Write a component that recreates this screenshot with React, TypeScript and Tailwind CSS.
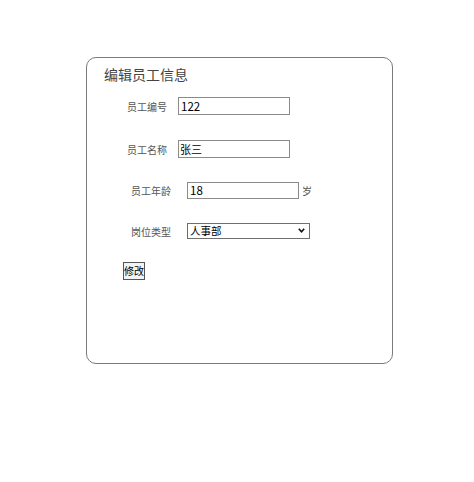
import { useState } from 'react';

const font = "font-['Noto_Sans_CJK_SC','Noto_Sans',sans-serif]";

export default function App() {
  const [code, setCode] = useState('122');
  const [name, setName] = useState('张三');
  const [age, setAge] = useState('18');
  const [dept, setDept] = useState('人事部');

  return (
    <div className={`min-h-[482px] w-[474px] bg-white pt-[57px] ${font}`}>
      <div className="ml-[86px] h-[307px] w-[307px] rounded-[10px] border border-[#7a7a7a] pt-[6px]">
        {/* 标题 */}
        <h2 className="ml-[17px] h-[20px] text-[14px] leading-[20px] text-[#444]">编辑员工信息</h2>

        {/* 员工编号 */}
        <div className="mt-[13px] flex h-[18px] items-center pl-[40px]">
          <span className="w-[40px] text-[10px] text-[#555]">员工编号</span>
          <input
            value={code}
            onChange={(e) => setCode(e.target.value)}
            className="ml-[11px] h-[18px] w-[112px] border border-[#8a8a8a] px-[2px] text-[11.5px] text-black outline-none"
          />
        </div>

        {/* 员工名称 */}
        <div className="mt-[25px] flex h-[18px] items-center pl-[40px]">
          <span className="w-[40px] text-[10px] text-[#555]">员工名称</span>
          <input
            value={name}
            onChange={(e) => setName(e.target.value)}
            className="ml-[11px] h-[18px] w-[112px] border border-[#8a8a8a] px-[1px] text-[11px] text-black outline-none"
          />
        </div>

        {/* 员工年龄 */}
        <div className="mt-[24px] flex h-[17px] items-center pl-[44px]">
          <span className="w-[40px] text-[10px] text-[#555]">员工年龄</span>
          <input
            value={age}
            onChange={(e) => setAge(e.target.value)}
            className="ml-[16px] h-[17px] w-[112px] border border-[#8a8a8a] px-[2px] text-[11.5px] text-black outline-none"
          />
          <span className="ml-[3px] text-[10px] text-[#555]">岁</span>
        </div>

        {/* 岗位类型 */}
        <div className="mt-[24px] flex h-[16px] items-center pl-[44px]">
          <span className="w-[40px] text-[10px] text-[#555]">岗位类型</span>
          <div className="relative ml-[16px] h-[16px] w-[123px]">
            <select
              value={dept}
              onChange={(e) => setDept(e.target.value)}
              className="block h-[16px] w-[123px] appearance-none border border-[#6f6f6f] bg-white py-0 pl-[2px] text-[10.5px] leading-[14px] text-black outline-none"
            >
              <option>人事部</option>
              <option>财务部</option>
              <option>技术部</option>
            </select>
            <svg
              className="pointer-events-none absolute right-[5px] top-[5px] h-[5px] w-[7px]"
              viewBox="0 0 7 5"
              fill="none"
              stroke="#111"
              strokeWidth={1.6}
            >
              <path d="M0.8 0.8 L3.5 3.8 L6.2 0.8" />
            </svg>
          </div>
        </div>

        <button className="ml-[36px] mt-[23px] flex h-[18px] w-[22px] items-center justify-center whitespace-nowrap border border-[#555] bg-[#f3f3f3] p-0 text-[10px] leading-none text-black">
          修改
        </button>
      </div>
    </div>
  );
}
